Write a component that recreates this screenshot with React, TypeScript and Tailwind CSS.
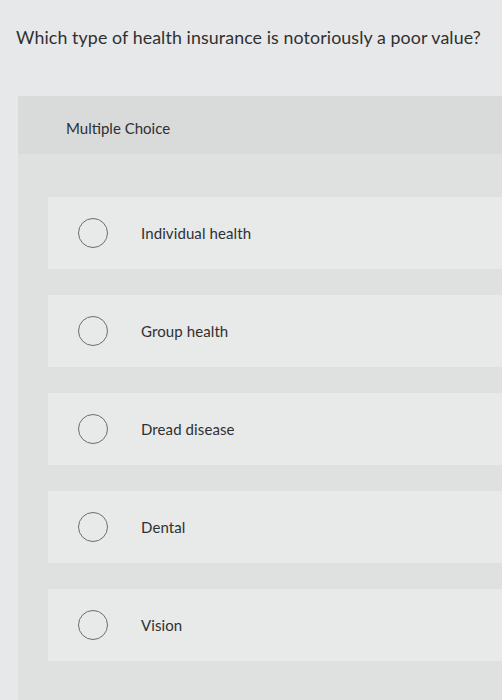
const options = ['Individual health', 'Group health', 'Dread disease', 'Dental', 'Vision'];

function Radio() {
  return <span className="block h-[30px] w-[30px] shrink-0 rounded-full border-[1.5px] border-[#6b6d6e]" />;
}

export default function App() {
  return (
    <div className="min-h-[700px] bg-[#e7e8e9] pt-[24px] text-[#2f3031]" style={{ fontFamily: 'Lato, "Open Sans", sans-serif' }}>
      <h1 className="pl-[16px] text-[17.8px] leading-[26px] tracking-[0.1px]">
        Which type of health insurance is notoriously a poor value?
      </h1>

      <div className="ml-[18px] mt-[46px] bg-[#dfe0e0]">
        <div className="flex h-[58px] items-center bg-[#d9dada] pl-[48px] pt-[6px] text-[15px]">Multiple Choice</div>
        <div className="flex flex-col gap-[26px] pb-[40px] pt-[43px]">
          {options.map((o) => (
            <div key={o} className="ml-[30px] flex h-[72px] items-center bg-[#e8e9e9] pl-[30px]">
              <Radio />
              <span className="ml-[33px] text-[15px] tracking-[0.1px]">{o}</span>
            </div>
          ))}
        </div>
      </div>
    </div>
  );
}
